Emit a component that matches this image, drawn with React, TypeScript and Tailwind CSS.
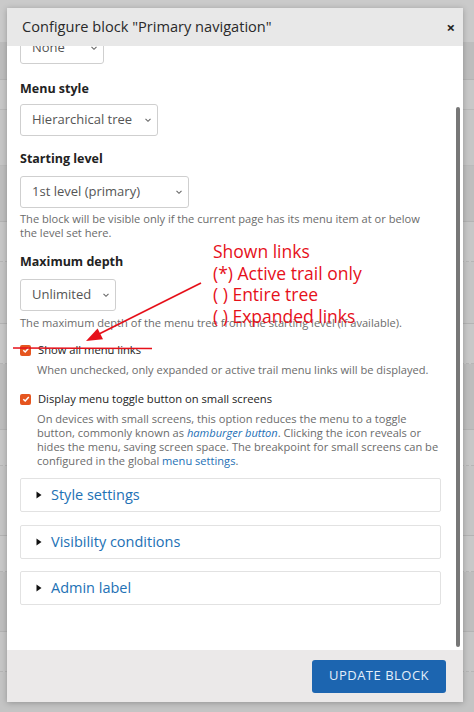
import React from 'react';

const font = { fontFamily: '"Open Sans", "Noto Sans", sans-serif' };

function Chevron() {
  return (
    <svg width="8" height="6" viewBox="0 0 8 6" className="shrink-0">
      <path d="M1.5 1.8 L4 4.3 L6.5 1.8" fill="none" stroke="#666" strokeWidth="1.1" />
    </svg>
  );
}

function Select({ label, width }: { label: string; width: string }) {
  return (
    <div className={`${width} h-[32px] flex items-center justify-between pl-[11px] pr-[5px] border border-[#cfcfcf] rounded-[3px] bg-white text-[13px] text-[#555]`}>
      <span>{label}</span>
      <Chevron />
    </div>
  );
}

function Check() {
  return (
    <div className="w-[11px] h-[11px] rounded-[2px] bg-[#e5551f] flex items-center justify-center shrink-0">
      <svg width="8" height="8" viewBox="0 0 8 8">
        <path d="M1.3 4.2 L3.2 6 L6.8 1.9" fill="none" stroke="#fff" strokeWidth="1.5" />
      </svg>
    </div>
  );
}

function Details({ title }: { title: string }) {
  return (
    <div className="h-[34px] border border-[#e2e2e2] rounded-[2px] flex items-center pl-[15px] gap-[9px]">
      <svg width="6" height="8" viewBox="0 0 6 8">
        <path d="M0.5 0.5 L5.5 4 L0.5 7.5 Z" fill="#111" />
      </svg>
      <span className="text-[14.5px] text-[#2271b5]">{title}</span>
    </div>
  );
}

export default function App() {
  return (
    <div className="relative w-[474px] h-[712px] overflow-hidden bg-[#c4c4c4]" style={font}>
      {/* dimmed page behind the dialog */}
      <div className="flex flex-col">
        <div className="h-[42px] bg-[#cacaca]" />
        <div className="h-[38px] bg-[#bdbdbd] border-b border-[#b3b3b3]" />
        <div className="h-[30px] bg-[#c8c8c8] border-b border-[#b9b9b9]" />
        <div className="h-[56px] bg-[#c6c6c6] border-b border-[#bababa]" />
        <div className="h-[56px] bg-[#bebebe] border-b border-[#b3b3b3]" />
        <div className="h-[40px] bg-[#c7c7c7] border-b border-dashed border-[#b5b5b5]" />
        <div className="h-[62px] bg-[#c5c5c5] border-b border-[#b3b3b3]" />
        <div className="h-[40px] bg-[#c8c8c8] border-b border-dashed border-[#b5b5b5]" />
        <div className="h-[66px] bg-[#bdbdbd] border-b border-[#b3b3b3]" />
        <div className="h-[36px] bg-[#c7c7c7] border-b border-dashed border-[#b5b5b5]" />
        <div className="h-[70px] bg-[#c5c5c5] border-b border-[#b3b3b3]" />
        <div className="h-[36px] bg-[#c8c8c8] border-b border-dashed border-[#b5b5b5]" />
        <div className="h-[60px] bg-[#bebebe] border-b border-[#b3b3b3]" />
        <div className="h-[40px] bg-[#c6c6c6] border-b border-dashed border-[#b5b5b5]" />
      </div>

      {/* dialog */}
      <div className="absolute top-[8px] left-[7px] w-[456px] h-[694px] flex flex-col bg-white shadow-[0_1px_6px_rgba(0,0,0,0.25)]">
        <div className="h-[38px] shrink-0 bg-[#e8e8e8] flex items-center justify-between pl-[15px] pr-[8px]">
          <span className="text-[14.6px] text-[#2a2a2a]">Configure block "Primary navigation"</span>
          <span className="text-[15px] font-bold text-[#222] leading-none">×</span>
        </div>

        <div className="relative flex-1 overflow-hidden">
          <div className="-mt-[14px] pl-[13px] pr-[22px] flex flex-col">
            <Select label="None" width="w-[84px]" />

            <div className="mt-[16px] text-[12.5px] font-bold text-[#222] leading-[18px]">Menu style</div>
            <div className="mt-[6px]"><Select label="Hierarchical tree" width="w-[138px]" /></div>

            <div className="mt-[14px] text-[12.5px] font-bold text-[#222] leading-[18px]">Starting level</div>
            <div className="mt-[8px]"><Select label="1st level (primary)" width="w-[169px]" /></div>
            <p className="mt-[4px] mr-[6px] text-[11.1px] leading-[14px] text-[#6b6b6b]">
              The block will be visible only if the current page has its menu item at or below the level set here.
            </p>

            <div className="mt-[13px] text-[12.5px] font-bold text-[#222] leading-[18px]">Maximum depth</div>
            <div className="mt-[8px]"><Select label="Unlimited" width="w-[96px]" /></div>
            <p className="mt-[5px] text-[11.1px] leading-[14px] text-[#6b6b6b]">
              The maximum depth of the menu tree from the starting level (if available).
            </p>

            <div className="mt-[13px] flex items-center gap-[7px] h-[14px]">
              <Check />
              <span className="text-[11.2px] text-[#222]">Show all menu links</span>
            </div>
            <p className="mt-[6px] pl-[17px] text-[11.1px] leading-[14px] text-[#6b6b6b]">
              When unchecked, only expanded or active trail menu links will be displayed.
            </p>

            <div className="mt-[15px] flex items-center gap-[7px] h-[14px]">
              <Check />
              <span className="text-[11.2px] text-[#222]">Display menu toggle button on small screens</span>
            </div>
            <p className="mt-[6px] -mr-[4px] pl-[17px] text-[11.1px] leading-[14px] text-[#6b6b6b]">
              On devices with small screens, this option reduces the menu to a toggle button, commonly known as{' '}
              <em className="text-[#1d6fb5]">hamburger button</em>. Clicking the icon reveals or hides the menu, saving
              screen space. The breakpoint for small screens can be configured in the global{' '}
              <span className="text-[#1d6fb5]">menu settings</span>.
            </p>

            <div className="mt-[10px] flex flex-col gap-[12.5px]">
              <Details title="Style settings" />
              <Details title="Visibility conditions" />
              <Details title="Admin label" />
            </div>
          </div>

          {/* scrollbar thumb */}
          <div className="absolute right-[3px] top-[61px] w-[4px] h-[540px] rounded-full bg-[#777]" />
        </div>

        <div className="h-[52px] shrink-0 bg-[#ebe9e9] flex items-center justify-end pr-[17px]">
          <button className="w-[134px] h-[33px] rounded-[3px] bg-[#1c65b0] text-[13px] tracking-[0.5px] text-[#e3eefa]">
            UPDATE BLOCK
          </button>
        </div>
      </div>

      {/* red annotation drawn over the dialog */}
      <div className="absolute left-[213px] top-[241px] text-[17.5px] leading-[21.6px] text-[#e6101a] pointer-events-none">
        <div>Shown links</div>
        <div>(*) Active trail only</div>
        <div>( ) Entire tree</div>
        <div>( ) Expanded links</div>
      </div>
      <svg className="absolute inset-0 pointer-events-none" width="474" height="712">
        <line x1="201" y1="283" x2="97" y2="335" stroke="#e6101a" strokeWidth="1.8" />
        <path d="M86 341 L97.6 328.4 L103 339.2 Z" fill="#e6101a" />
        <line x1="13" y1="348" x2="152" y2="348.5" stroke="#e6101a" strokeWidth="1.6" />
      </svg>
    </div>
  );
}
